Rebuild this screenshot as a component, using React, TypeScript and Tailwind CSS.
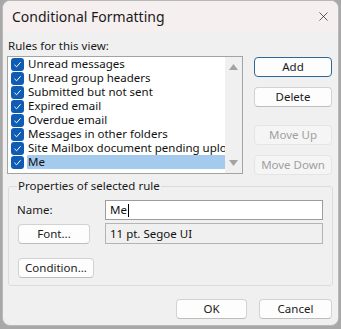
import { X } from "lucide-react"

const rules = [
  "Unread messages",
  "Unread group headers",
  "Submitted but not sent",
  "Expired email",
  "Overdue email",
  "Messages in other folders",
  "Site Mailbox document pending upload",
  "Me",
]

function Check() {
  return (
    <span className="flex h-[13px] w-[13px] shrink-0 items-center justify-center rounded-[3px] bg-[#0f5cb5]">
      <svg width="9" height="9" viewBox="0 0 9 9" fill="none">
        <path d="M1.5 4.8 L3.6 6.8 L7.6 2.2" stroke="white" strokeWidth="1" />
      </svg>
    </span>
  )
}

function Btn({ label, w, primary, disabled }: { label: string; w: string; primary?: boolean; disabled?: boolean }) {
  const base = "flex h-[20px] items-center justify-center rounded-[4px] border text-[11.5px] leading-none"
  const look = disabled
    ? "border-[#e5e5e5] bg-[#f5f5f5] text-[#a0a0a0]"
    : primary
      ? "border-[#2f6894] bg-[#fdfdfd] text-[#1a1a1a]"
      : "border-[#d2d2d2] border-b-[#bdbdbd] bg-[#fdfdfd] text-[#1a1a1a]"
  return <div className={`${base} ${look} ${w}`}>{label}</div>
}

export default function App() {
  return (
    <div
      className="h-[329px] w-[341px] bg-[#a8a8a8] pl-[2px] pr-[2px] pb-[3px]"
      style={{ fontFamily: '"Noto Sans", "Open Sans", sans-serif' }}
    >
      <div className="flex h-[326px] flex-col overflow-hidden rounded-[8px] border border-[#b9b9b9] bg-[#f0f0f0]">
        {/* title bar */}
        <div className="flex h-[31px] shrink-0 items-center justify-between bg-[#f6eff0] pl-[9px] pr-[7px]">
          <span className="text-[14px] text-[#1a1a1a]">Conditional Formatting</span>
          <X size={15} strokeWidth={1.1} className="text-[#1a1a1a]" />
        </div>

        <div className="mt-[6px] h-[16px] pl-[5px] text-[11.5px] leading-[16px] text-[#1a1a1a]">Rules for this view:</div>

        <div className="mt-[2px] flex">
          {/* rules list */}
          <div className="ml-[4px] flex h-[118px] w-[236px] border border-[#a3a3a3] bg-white">
            <div className="flex flex-1 flex-col overflow-hidden pl-[3px]">
              {rules.map((r, i) => (
                <div key={r} className="flex h-[14px] items-center">
                  <Check />
                  <span
                    className={`ml-[3px] h-[14px] flex-1 overflow-hidden whitespace-nowrap pl-[1px] text-[11.5px] leading-[14px] text-[#111] ${
                      i === rules.length - 1 ? "bg-[#a4cbee]" : ""
                    }`}
                  >
                    {r}
                  </span>
                </div>
              ))}
            </div>
            <div className="flex w-[17px] flex-col items-center justify-between bg-[#f0f0f0] py-[7px]">
              <svg width="9" height="6" viewBox="0 0 9 6">
                <path d="M4.5 0 L9 6 L0 6 Z" fill="#a3a3a3" />
              </svg>
              <svg width="9" height="6" viewBox="0 0 9 6">
                <path d="M0 0 L9 0 L4.5 6 Z" fill="#a3a3a3" />
              </svg>
            </div>
          </div>

          {/* right buttons */}
          <div className="ml-[11px] flex w-[78px] flex-col">
            <div className="mt-[1px]">
              <Btn label="Add" w="w-[78px]" primary />
            </div>
            <div className="mt-[10px]">
              <Btn label="Delete" w="w-[78px]" />
            </div>
            <div className="mt-[18px]">
              <Btn label="Move Up" w="w-[78px]" disabled />
            </div>
            <div className="mt-[10px]">
              <Btn label="Move Down" w="w-[78px]" disabled />
            </div>
          </div>
        </div>

        {/* properties group */}
        <fieldset className="ml-[5px] mt-[3px] h-[108px] w-[325px] rounded-[3px] border border-[#dcdcdc] pl-[8px]">
          <legend className="h-[16px] px-[1px] text-[11.5px] leading-[16px] text-[#1a1a1a]">
            Properties of selected rule
          </legend>
          <div className="mt-[6px] flex h-[20px] items-center">
            <span className="w-[88px] text-[11.5px] text-[#1a1a1a]">Name:</span>
            <div className="flex h-[20px] w-[218px] items-center border border-[#9d9d9d] bg-white pl-[4px] text-[11.5px] text-[#111]">
              Me<span className="ml-[1px] h-[13px] w-px bg-black" />
            </div>
          </div>
          <div className="mt-[3px] flex h-[21px] items-center">
            <div className="w-[88px] pl-[1px]">
              <Btn label="Font..." w="w-[72px]" />
            </div>
            <div className="flex h-[21px] w-[218px] items-center border border-[#b4b4b4] bg-[#f0f0f0] pl-[4px] text-[11.5px] text-[#111]">
              11 pt. Segoe UI
            </div>
          </div>
          <div className="mt-[14px] pl-[1px]">
            <Btn label="Condition..." w="w-[76px]" />
          </div>
        </fieldset>

        {/* footer */}
        <div className="mt-[13px] flex justify-end gap-[12px] pr-[6px]">
          <Btn label="OK" w="w-[71px]" />
          <Btn label="Cancel" w="w-[73px]" />
        </div>
      </div>
    </div>
  )
}
